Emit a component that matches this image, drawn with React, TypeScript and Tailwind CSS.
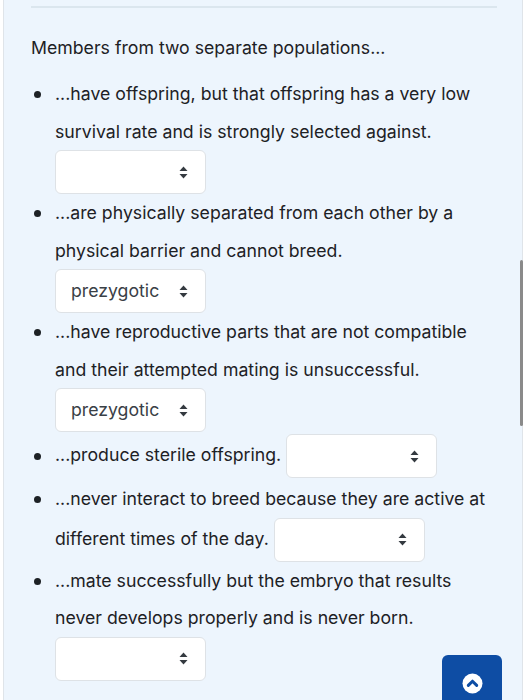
type Item = { text: string; value: string; inline?: boolean; spaced?: boolean };

const ITEMS: Item[] = [
  { text: '...have offspring, but that offspring has a very low survival rate and is strongly selected against.', value: '' },
  { text: '...are physically separated from each other by a physical barrier and cannot breed.', value: 'prezygotic' },
  { text: '...have reproductive parts that are not compatible and their attempted mating is unsuccessful.', value: 'prezygotic' },
  { text: '...produce sterile offspring.', value: '', inline: true, spaced: true },
  { text: '...never interact to breed because they are active at different times of the day.', value: '', inline: true },
  { text: '...mate successfully but the embryo that results never develops properly and is never born.', value: '' },
];

function SortCaret() {
  return (
    <svg width="9" height="13" viewBox="0 0 9 13" className="shrink-0" aria-hidden>
      <path d="M4.5 0.5 L8.5 5 H0.5 Z" fill="#343a40" />
      <path d="M0.5 8 H8.5 L4.5 12.5 Z" fill="#343a40" />
    </svg>
  );
}

function Dropdown({ value, spaced }: { value: string; spaced?: boolean }) {
  return (
    <span
      className={`inline-flex h-[44px] w-[151px] items-center justify-between rounded-[6px] border border-[#dee2e6] bg-white pl-[15px] pr-[17px] align-middle text-[#3a4046] ${spaced ? 'my-[2px]' : ''}`}
    >
      <span className="leading-none">{value}</span>
      <SortCaret />
    </span>
  );
}

export default function App() {
  return (
    <div className="relative h-[700px] w-[528px] overflow-hidden bg-white font-['Inter',sans-serif] text-[17.7px] text-[#1d2125]">
      <div className="ml-[3px] h-full w-[520px] border-x border-[#dfe4e9] bg-[#edf5fd] pl-[27px] pr-[20px] pt-[6px]">
        <div className="h-[2px] w-[466px] bg-[#dbe6ee]" />
        <p className="mt-[21px] leading-[37px]">Members from two separate populations...</p>
        <ul className="mt-[9px] list-none pl-[24px] leading-[37.5px]">
          {ITEMS.map((item, i) => (
            <li
              key={i}
              className={`relative before:absolute before:left-[-21px] before:size-[7px] before:rounded-full before:bg-[#1d2125] before:content-[''] ${item.spaced ? 'before:top-[21px]' : 'before:top-[16px]'}`}
            >
              {item.text}
              {item.inline ? ' ' : <br />}
              <Dropdown value={item.value} spaced={item.spaced} />
            </li>
          ))}
        </ul>
      </div>

      {/* scrollbar thumb */}
      <div className="absolute left-[520px] top-[260px] h-[166px] w-[3px] rounded-full bg-[#8a8a8a]" />

      {/* back to top */}
      <button
        type="button"
        className="absolute left-[442px] top-[655px] flex h-[60px] w-[60px] justify-center rounded-[6px] bg-[#0e4da4] pt-[18px]"
      >
        <svg width="21" height="21" viewBox="0 0 21 21" aria-hidden>
          <circle cx="10.5" cy="10.5" r="10" fill="#fff" />
          <path d="M6.3 12.4 L10.5 8.2 L14.7 12.4" fill="none" stroke="#0e4da4" strokeWidth="3" strokeLinecap="round" strokeLinejoin="round" />
        </svg>
      </button>
    </div>
  );
}
